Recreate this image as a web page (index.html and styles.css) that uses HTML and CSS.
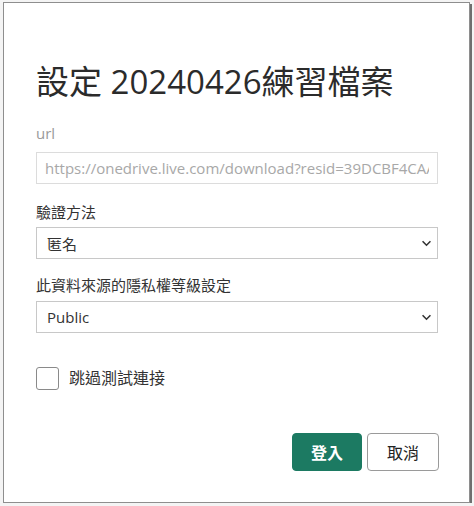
FILE: index.html
```html
<!DOCTYPE html>
<html lang="zh-Hant">

<head>
  <meta charset="UTF-8">
  <meta name="viewport" content="width=device-width, initial-scale=1.0">
  <title>設定 20240426練習檔案</title>
  <link rel="stylesheet" href="styles.css">
</head>

<body>
  <div class="dialog">
    <h1 class="title">設定 20240426練習檔案</h1>

    <label class="label muted" for="url">url</label>
    <input class="field" id="url" type="text" readonly
      value="https://onedrive.live.com/download?resid=39DCBF4CAA38D0A3%21123">

    <label class="label">驗證方法</label>
    <div class="select">
      <span>匿名</span>
      <svg class="chevron" viewBox="0 0 12 8" width="11" height="7">
        <path d="M1.5 1.5 6 6l4.5-4.5" fill="none" stroke="#333" stroke-width="1.8" />
      </svg>
    </div>

    <label class="label">此資料來源的隱私權等級設定</label>
    <div class="select">
      <span>Public</span>
      <svg class="chevron" viewBox="0 0 12 8" width="11" height="7">
        <path d="M1.5 1.5 6 6l4.5-4.5" fill="none" stroke="#333" stroke-width="1.8" />
      </svg>
    </div>

    <label class="check">
      <span class="box"></span>
      <span>跳過測試連接</span>
    </label>

    <div class="actions">
      <button class="btn primary">登入</button>
      <button class="btn">取消</button>
    </div>
  </div>
</body>

</html>
```

FILE: styles.css
```css
body {
  margin: 0;
  background: #f4f4f4;
  font-family: "Open Sans", "Noto Sans CJK TC", sans-serif;
  color: #333;
}

.dialog {
  box-sizing: border-box;
  inline-size: 467px;
  block-size: 501px;
  margin: 2px 0 0 3px;
  padding: 53px 30px 0 32px;
  background: #fff;
  border: 1px solid #8e8e8e;
  box-shadow: 2px 2px 0 #6f6f6f;
  display: flex;
  flex-direction: column;
}

.title {
  margin: 0 0 15px;
  font-size: 33px;
  font-weight: 400;
  line-height: 52px;
  color: #2b2b2b;
  white-space: nowrap;
}

.label {
  display: block;
  font-size: 15px;
  line-height: 20px;
  margin-block-end: 5px;
  color: #333;
}

.label.muted {
  color: #9a9a9a;
  margin-block-end: 9px;
}

.field {
  box-sizing: border-box;
  inline-size: 402px;
  block-size: 32px;
  margin: 0 0 18px;
  padding: 0 8px;
  border: 1px solid #dcdcdc;
  font: inherit;
  font-size: 15px;
  color: #a8a8a8;
  background: #fff;
  outline: none;
}

.select {
  box-sizing: border-box;
  inline-size: 402px;
  block-size: 32px;
  margin-block-end: 16px;
  padding: 0 5px 0 10px;
  border: 1px solid #c8c8c8;
  display: flex;
  align-items: center;
  justify-content: space-between;
  font-size: 15px;
  color: #333;
}

.select + .label {
  margin-block-end: 6px;
}

.check {
  display: flex;
  align-items: center;
  gap: 10px;
  margin-block-start: 18px;
  font-size: 16px;
  line-height: 23px;
  color: #333;
}

.box {
  box-sizing: border-box;
  inline-size: 23px;
  block-size: 23px;
  border: 1px solid #8a8a8a;
  border-radius: 3px;
}

.actions {
  display: flex;
  justify-content: flex-end;
  gap: 5px;
  margin-block-start: 43px;
}

.btn {
  box-sizing: border-box;
  inline-size: 72px;
  block-size: 38px;
  border: 1px solid #9a9a9a;
  border-radius: 4px;
  background: #fff;
  font-family: "Noto Sans CJK TC", sans-serif;
  font-size: 16px;
  color: #222;
}

.btn.primary {
  inline-size: 70px;
  background: #1c7a62;
  border-color: #1c7a62;
  color: #fff;
  font-weight: 700;
}
```
